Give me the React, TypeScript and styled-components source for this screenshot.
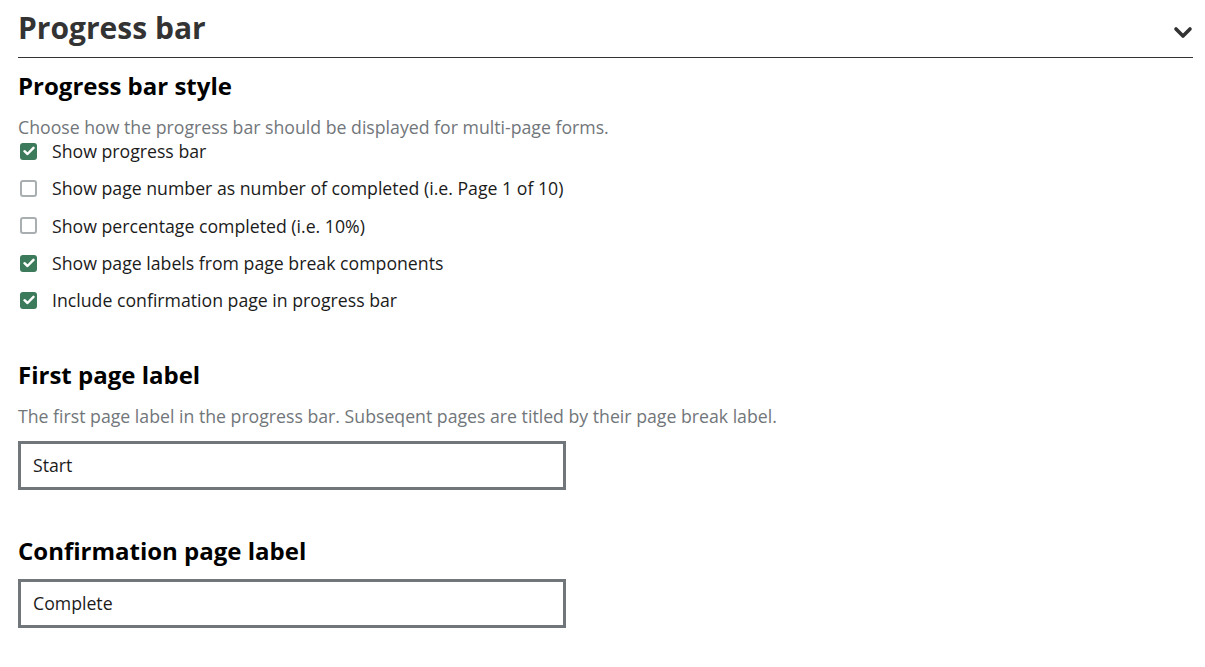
import React, { useState } from 'react';
import styled, { createGlobalStyle } from 'styled-components';

const GlobalStyle = createGlobalStyle`
  body {
    margin: 0;
    background: #fff;
    font-family: "Open Sans", Lato, sans-serif;
    color: #1b1b1b;
  }
`;

interface Option {
  id: string;
  label: string;
  checked: boolean;
}

const initialOptions: Option[] = [
  { id: 'show-progress', label: 'Show progress bar', checked: true },
  {
    id: 'page-number',
    label: 'Show page number as number of completed (i.e. Page 1 of 10)',
    checked: false,
  },
  { id: 'percentage', label: 'Show percentage completed (i.e. 10%)', checked: false },
  { id: 'page-labels', label: 'Show page labels from page break components', checked: true },
  { id: 'confirmation', label: 'Include confirmation page in progress bar', checked: true },
];

const CheckIcon = () => (
  <svg width="12" height="10" viewBox="0 0 12 10">
    <path d="M1.5 5.2 L4.5 8 L10.5 1.8" fill="none" stroke="#fff" strokeWidth="2.4" strokeLinecap="round" strokeLinejoin="round" />
  </svg>
);

const ChevronIcon = () => (
  <svg width="20" height="14" viewBox="0 0 20 14">
    <path d="M3 3 L10 10 L17 3" fill="none" stroke="#333" strokeWidth="3.6" strokeLinecap="round" strokeLinejoin="round" />
  </svg>
);

const App: React.FC = () => {
  const [options, setOptions] = useState(initialOptions);
  const [firstLabel, setFirstLabel] = useState('Start');
  const [confirmLabel, setConfirmLabel] = useState('Complete');

  const toggleOption = (id: string) => {
    setOptions((prev) => prev.map((o) => (o.id === id ? { ...o, checked: !o.checked } : o)));
  };

  return (
    <>
      <GlobalStyle />
      <Container>
        <Header>
          <Title>Progress bar</Title>
          <ToggleButton type="button" aria-label="Collapse">
            <ChevronIcon />
          </ToggleButton>
        </Header>

        <Section spacing={13}>
          <SectionTitle>Progress bar style</SectionTitle>
          <Hint>Choose how the progress bar should be displayed for multi-page forms.</Hint>
          <CheckList>
            {options.map((o) => (
              <CheckRow key={o.id} onClick={() => toggleOption(o.id)}>
                <Box checked={o.checked}>{o.checked && <CheckIcon />}</Box>
                <CheckLabel>{o.label}</CheckLabel>
              </CheckRow>
            ))}
          </CheckList>
        </Section>

        <Section spacing={41}>
          <SectionTitle>First page label</SectionTitle>
          <Hint>
            The first page label in the progress bar. Subseqent pages are titled by their page
            break label.
          </Hint>
          <TextInput value={firstLabel} onChange={(e) => setFirstLabel(e.target.value)} />
        </Section>

        <Section spacing={46}>
          <SectionTitle>Confirmation page label</SectionTitle>
          <TextInput value={confirmLabel} onChange={(e) => setConfirmLabel(e.target.value)} />
        </Section>
      </Container>
    </>
  );
};

const Container = styled.div`
  padding: 0 12px 0 18px;
`;

const Header = styled.div`
  display: flex;
  align-items: center;
  justify-content: space-between;
  height: 57px;
  border-bottom: 1px solid #333;
`;

const Title = styled.h2`
  margin: 0 0 2px;
  font-size: 30px;
  line-height: 36px;
  font-weight: 700;
  color: #333;
`;

const ToggleButton = styled.button`
  display: flex;
  padding: 0;
  margin: 8px 0 0;
  border: 0;
  background: none;
  cursor: pointer;
`;

const Section = styled.div<{ spacing: number }>`
  margin-top: ${(p) => p.spacing}px;
`;

const SectionTitle = styled.h3`
  margin: 0;
  font-size: 24px;
  font-weight: 700;
  color: #000;
  line-height: 30px;
`;

const Hint = styled.p`
  margin: 15px 0 0;
  font-size: 17.7px;
  line-height: 22px;
  color: #71767a;
`;

const CheckList = styled.div`
  display: flex;
  flex-direction: column;
  margin-top: -5.5px;
`;

const CheckRow = styled.label`
  display: flex;
  align-items: center;
  gap: 15px;
  height: 37.3px;
`;

const Box = styled.span<{ checked: boolean }>`
  display: flex;
  align-items: center;
  justify-content: center;
  box-sizing: border-box;
  width: 17px;
  height: 17px;
  margin-left: 2px;
  border-radius: 3px;
  border: ${(p) => (p.checked ? '0' : '2px solid #a9aeb1')};
  background: ${(p) => (p.checked ? '#3b7a5a' : '#fff')};
`;

const CheckLabel = styled.span`
  font-size: 17.7px;
  line-height: 22px;
  color: #1b1b1b;
`;

const TextInput = styled.input`
  display: block;
  box-sizing: border-box;
  width: 548px;
  height: 49px;
  margin-top: 14px;
  padding: 0 12px;
  border: 3px solid #71767a;
  font-family: inherit;
  font-size: 17.7px;
  color: #1b1b1b;
  outline: none;

  h3 + & {
    margin-top: 13px;
  }
`;

export default App;
